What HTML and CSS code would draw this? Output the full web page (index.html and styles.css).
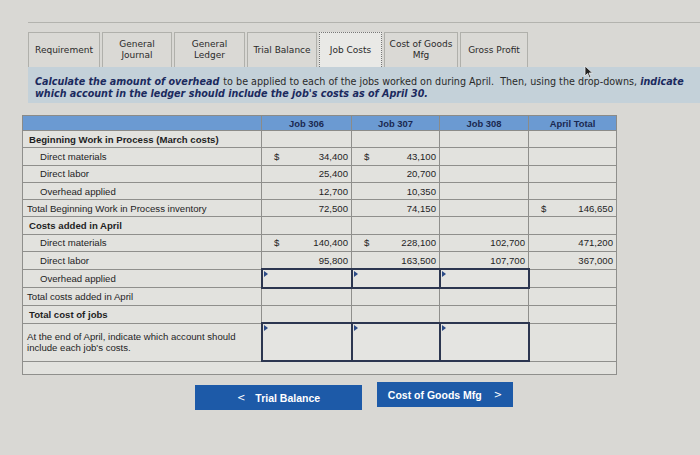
FILE: index.html
```html
<!DOCTYPE html>
<html>
<head>
<meta charset="utf-8">
<link rel="stylesheet" href="styles.css">
</head>
<body>
<div class="page">
  <div class="frame">
    <div class="tabs">
      <div class="tab w72">Requirement</div>
      <div class="tab w70">General<br>Journal</div>
      <div class="tab w71">General<br>Ledger</div>
      <div class="tab w70">Trial Balance</div>
      <div class="tab w63 active">Job Costs</div>
      <div class="tab w74">Cost of Goods<br>Mfg</div>
      <div class="tab w68">Gross Profit</div>
    </div>
    <div class="instr">
      <div class="line"><b>Calculate the amount of overhead</b> <span>to be applied to each of the jobs worked on during April.&nbsp; Then, using the drop-downs,</span> <b>indicate</b></div>
      <div class="line"><b>which account in the ledger should include the job's costs as of April 30.</b></div>
    </div>
  </div>

  <table class="grid">
    <colgroup>
      <col class="c-label"><col class="c-num"><col class="c-num2"><col class="c-num3"><col class="c-num2">
    </colgroup>
    <thead>
      <tr><th></th><th>Job 306</th><th>Job 307</th><th>Job 308</th><th>April Total</th></tr>
    </thead>
    <tbody>
      <tr><td class="lbl bold">Beginning Work in Process (March costs)</td><td></td><td></td><td></td><td></td></tr>
      <tr><td class="lbl ind">Direct materials</td><td class="n"><span class="d">$</span>34,400</td><td class="n"><span class="d">$</span>43,100</td><td></td><td></td></tr>
      <tr><td class="lbl ind">Direct labor</td><td class="n">25,400</td><td class="n">20,700</td><td></td><td></td></tr>
      <tr><td class="lbl ind">Overhead applied</td><td class="n">12,700</td><td class="n">10,350</td><td></td><td></td></tr>
      <tr><td class="lbl">Total Beginning Work in Process inventory</td><td class="n">72,500</td><td class="n">74,150</td><td></td><td class="n"><span class="d">$</span>146,650</td></tr>
      <tr><td class="lbl bold">Costs added in April</td><td></td><td></td><td></td><td></td></tr>
      <tr><td class="lbl ind">Direct materials</td><td class="n"><span class="d">$</span>140,400</td><td class="n"><span class="d">$</span>228,100</td><td class="n">102,700</td><td class="n">471,200</td></tr>
      <tr><td class="lbl ind">Direct labor</td><td class="n">95,800</td><td class="n">163,500</td><td class="n">107,700</td><td class="n">367,000</td></tr>
      <tr><td class="lbl ind">Overhead applied</td><td class="dd"><span class="flag"></span></td><td class="dd"><span class="flag"></span></td><td class="dd"><span class="flag"></span></td><td></td></tr>
      <tr><td class="lbl">Total costs added in April</td><td></td><td></td><td></td><td></td></tr>
      <tr><td class="lbl bold">Total cost of jobs</td><td></td><td></td><td></td><td></td></tr>
      <tr class="tall"><td class="lbl">At the end of April, indicate which account should include each job's costs.</td><td class="dd"><span class="flag"></span></td><td class="dd"><span class="flag"></span></td><td class="dd"><span class="flag"></span></td><td></td></tr>
      <tr class="empty"><td colspan="5"></td></tr>
    </tbody>
  </table>

  <div class="nav">
    <button class="btn prev"><span class="chev">&lt;</span>Trial Balance</button>
    <button class="btn next">Cost of Goods Mfg<span class="chev r">&gt;</span></button>
  </div>

  <svg class="cursor" width="10" height="14" viewBox="0 0 10 14"><path d="M1 1 L1 11 L3.5 8.5 L5.5 13 L7 12.3 L5 8 L8.5 8 Z" fill="#222" stroke="#eee" stroke-width="0.8"/></svg>
</div>
</body>
</html>
```

FILE: styles.css
```css
html, body {
  margin: 0;
  padding: 0;
  background: #d9d8d4;
}
.page {
  position: relative;
  width: 700px;
  height: 455px;
  overflow: hidden;
  padding-top: 22px;
  box-sizing: border-box;
  font-family: "Liberation Sans", Arial, sans-serif;
}
.frame {
  margin-left: 28px;
  border-top: 1px solid #b3b3ae;
  padding-top: 9px;
}
.tabs {
  display: flex;
  gap: 2px;
  height: 35px;
}
.tab {
  box-sizing: border-box;
  height: 35px;
  display: flex;
  align-items: center;
  justify-content: center;
  text-align: center;
  background: #dad9d5;
  border: 1px solid #b0b0ab;
  border-bottom: none;
  font-family: "DejaVu Sans", Verdana, sans-serif;
  font-size: 9px;
  line-height: 11px;
  color: #2a2a2a;
}
.tab.active {
  background: #e9e9e6;
  border: 1px dotted #777;
  border-bottom: none;
}
.w72 { width: 72px; }
.w70 { width: 70px; }
.w71 { width: 71px; }
.w63 { width: 63px; }
.w74 { width: 74px; }
.w68 { width: 68px; }
.instr {
  box-sizing: border-box;
  background: #c4d1d9;
  padding: 9px 0 0 7px;
  font-family: "DejaVu Sans", Verdana, sans-serif;
  font-size: 9.6px;
  line-height: 11.5px;
  color: #2a2a2a;
  height: 36px;
}
.instr .line {
  white-space: nowrap;
}
.instr b {
  font-style: italic;
  color: #1b2a5e;
  padding-right: 1px;
}
.grid {
  margin: 12px 0 0 22px;
  border-collapse: collapse;
  table-layout: fixed;
  width: 595px;
  font-size: 9.6px;
  color: #1e1e1e;
  background: #e2e2de;
}
.c-label { width: 239px; }
.c-num { width: 90px; }
.c-num2 { width: 88px; }
.c-num3 { width: 89px; }
.grid th {
  height: 14px;
  padding: 0;
  background: #6b9ad2;
  color: #1a2850;
  font-weight: bold;
  font-size: 9.4px;
  border: 1px solid #8b8b88;
}
.grid td {
  height: 16.3px;
  padding: 0 3px;
  border: 1px solid #8f8f8c;
  white-space: nowrap;
  overflow: hidden;
}
.grid td.lbl { padding-left: 4px; }
.grid td.ind { padding-left: 17px; }
.grid td.bold { font-weight: bold; padding-left: 6px; }
.grid td.n { text-align: right; }
.grid td .d { float: left; margin-left: 9px; }
.grid tr.tall td { height: 36px; }
.grid tr.tall td.lbl { white-space: normal; line-height: 11px; vertical-align: middle; padding-right: 10px; }
.grid tr.empty td { height: 12px; }
.grid td.dd {
  position: relative;
  border: 2px solid #2c3650;
  background: #e4e4e1;
}
.flag {
  position: absolute;
  left: 1px;
  top: 1px;
  width: 0;
  height: 0;
  border-top: 3px solid transparent;
  border-bottom: 3px solid transparent;
  border-left: 4px solid #2b4a86;
}
.nav {
  display: flex;
  gap: 15px;
  margin: 7px 0 0 195px;
  align-items: flex-start;
}
.btn {
  border: none;
  background: #1d5aa8;
  color: #fff;
  font-family: "Liberation Sans", Arial, sans-serif;
  font-weight: bold;
  font-size: 10.5px;
  height: 25px;
  padding: 0;
  display: flex;
  align-items: center;
  justify-content: center;
}
.btn.prev { width: 167px; margin-top: 3px; }
.btn.next { width: 136px; }
.chev { margin-right: 10px; font-weight: normal; font-family: "DejaVu Sans", sans-serif; font-size: 10px; }
.chev.r { margin: 0 0 0 12px; }
.cursor {
  position: absolute;
  left: 584px;
  top: 65px;
}
```
